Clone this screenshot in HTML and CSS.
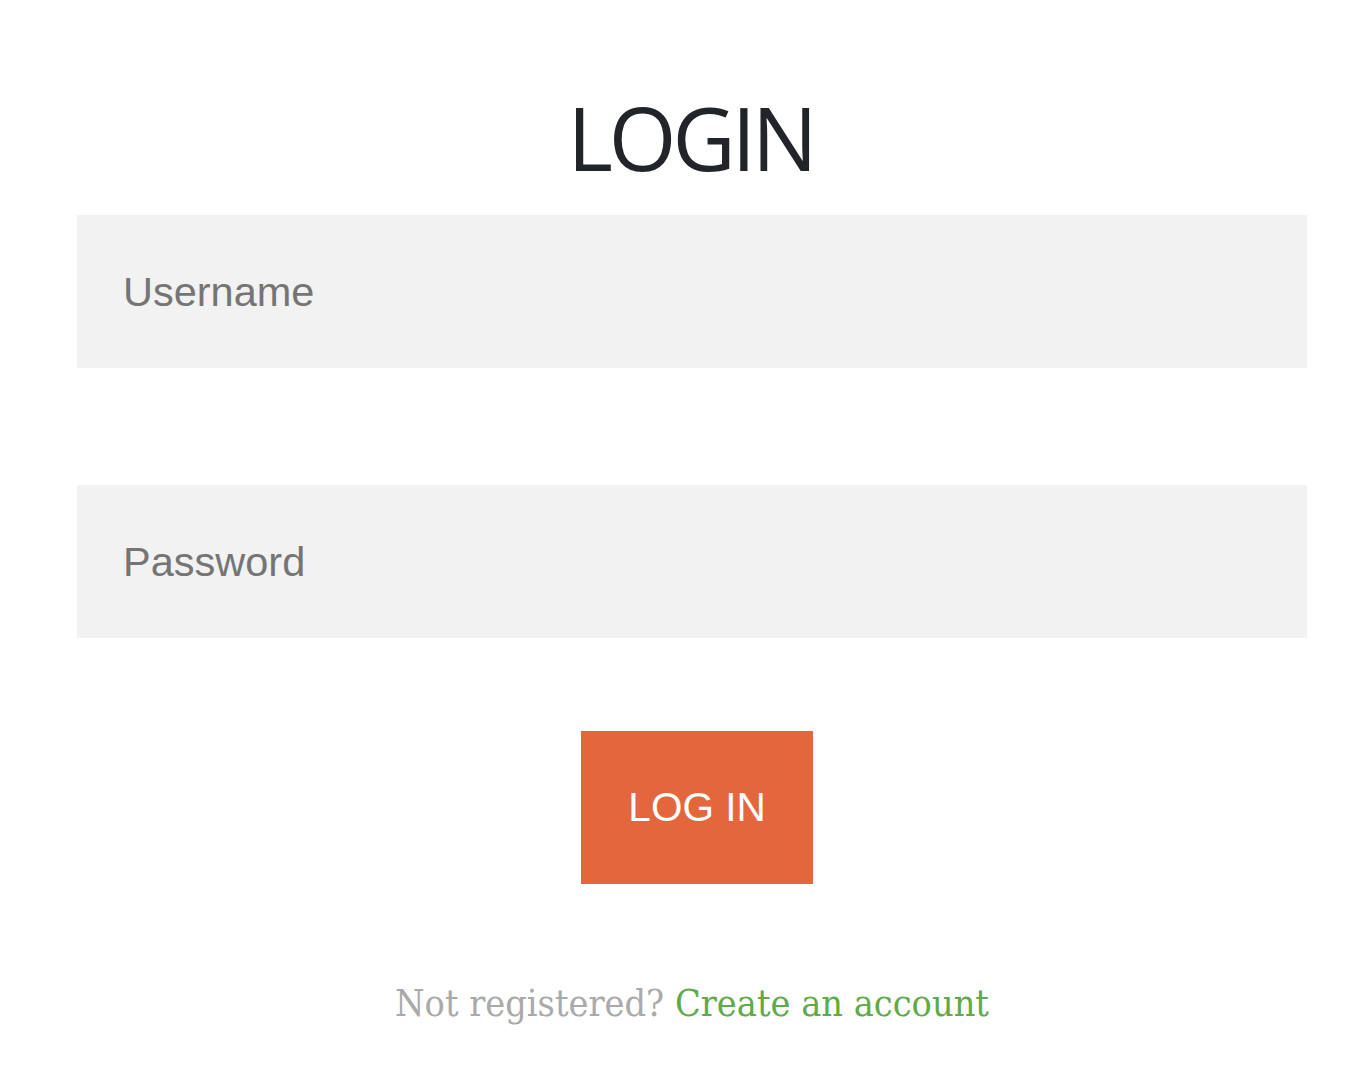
FILE: index.html
```html
<!DOCTYPE html>
<html lang="en">
<head>
<meta charset="utf-8">
<title>Login</title>
<link rel="stylesheet" href="styles.css">
</head>
<body>
<main class="page">
  <h1 class="title">LOGIN</h1>
  <form class="form">
    <input class="field" type="text" placeholder="Username">
    <input class="field field-second" type="password" placeholder="Password">
    <div class="actions">
      <button class="btn" type="button">LOG IN</button>
    </div>
  </form>
  <p class="footer">Not registered? <a class="link" href="#">Create an account</a></p>
</main>
</body>
</html>
```
FILE: styles.css
```css
html, body {
  margin: 0;
  padding: 0;
  background: #ffffff;
}

.page {
  padding: 0 50px 0 77px;
}

.title {
  margin: 93px 0 0 0;
  font-family: "Open Sans", sans-serif;
  font-weight: 400;
  font-size: 87px;
  line-height: 88px;
  color: #212529;
  text-align: center;
  letter-spacing: -4px;
  text-indent: -3px;
}

.form {
  margin-top: 34px;
}

.field {
  display: block;
  box-sizing: border-box;
  width: 100%;
  height: 153px;
  border: none;
  outline: none;
  margin: 0;
  padding: 0 0 0 46px;
  background: #f2f2f2;
  font-family: "Liberation Sans", Arial, sans-serif;
  font-size: 41.5px;
  color: #757575;
}

.field::placeholder {
  color: #757575;
  opacity: 1;
}

.field-second {
  margin-top: 117px;
}

.actions {
  display: flex;
  justify-content: center;
  margin-top: 93px;
  padding-left: 10px;
}

.btn {
  width: 232px;
  height: 153px;
  border: none;
  margin: 0;
  padding: 0;
  background: #e4663d;
  color: #ffffff;
  font-family: "Liberation Sans", Arial, sans-serif;
  font-size: 40.5px;
  cursor: pointer;
}

.footer {
  margin: 94px 0 0 0;
  text-align: center;
  font-family: "DejaVu Serif Condensed", "DejaVu Serif", serif;
  font-size: 37.5px;
  line-height: 50px;
  color: #aaaaaa;
}

.link {
  color: #5fab4b;
  text-decoration: none;
}
```
